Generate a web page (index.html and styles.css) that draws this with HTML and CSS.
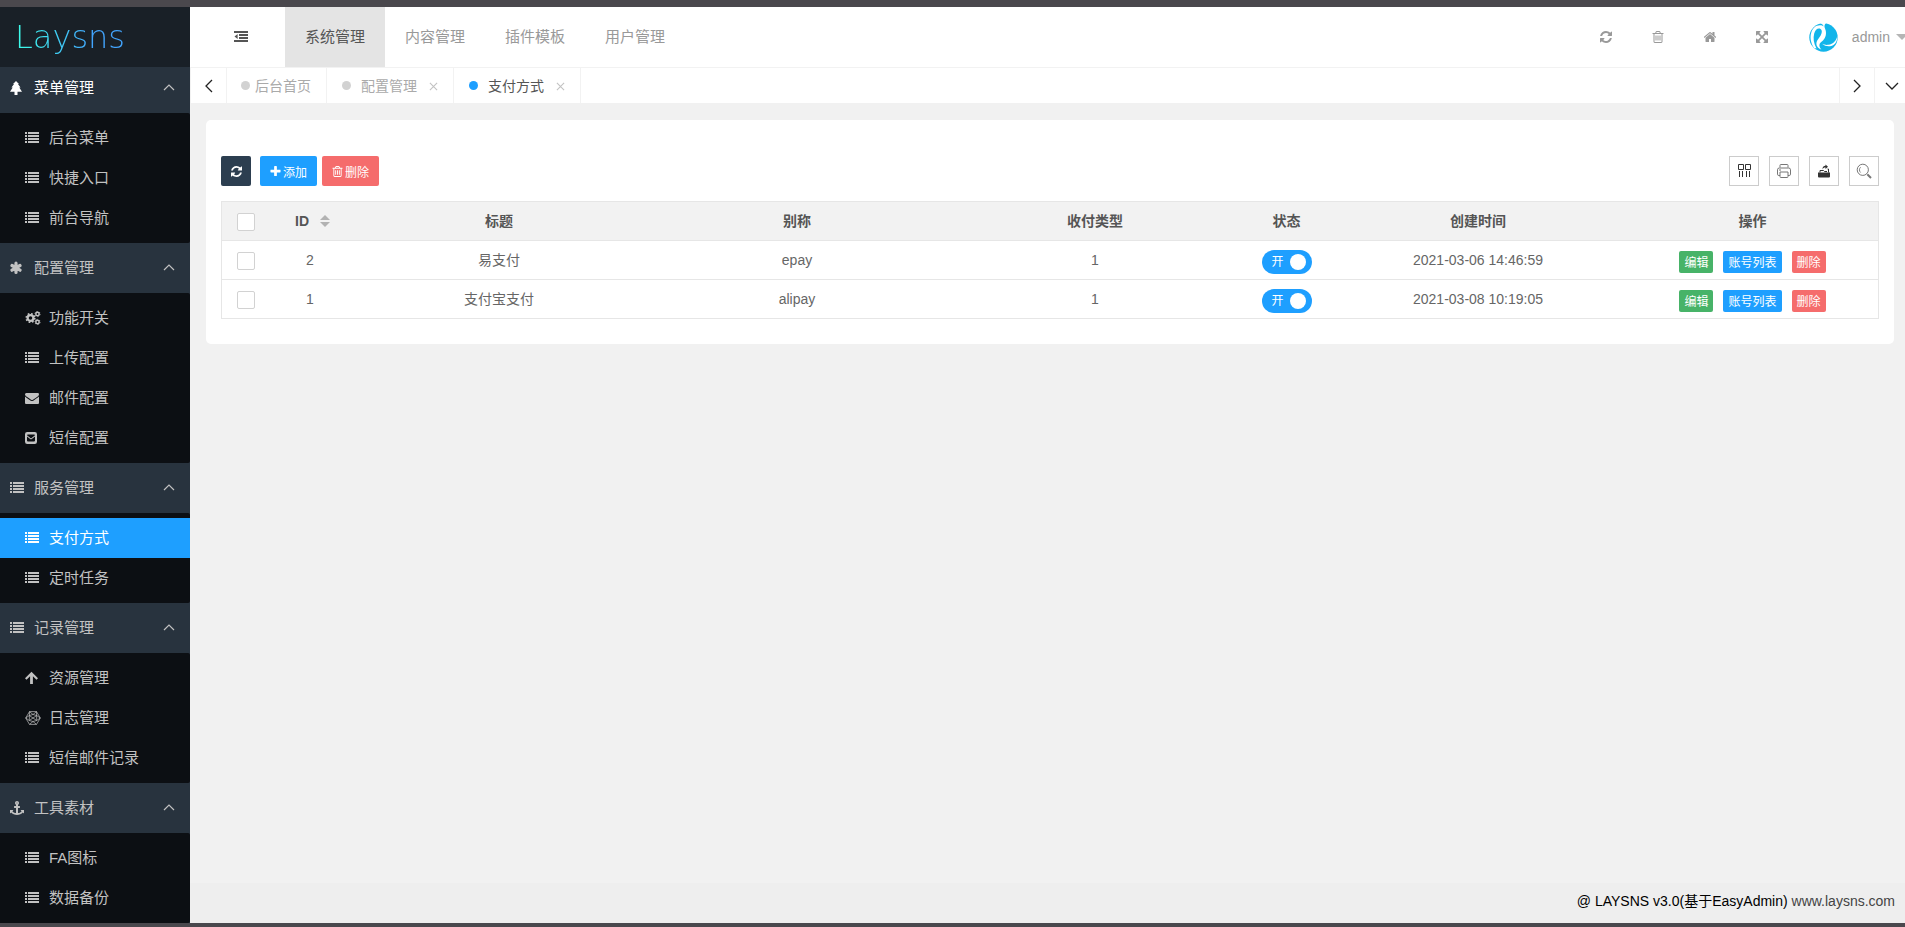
FILE: index.html
```html
<!DOCTYPE html>
<html lang="zh-CN">

<head>
  <meta charset="UTF-8">
  <meta name="viewport" content="width=device-width, initial-scale=1.0">
  <title>Laysns</title>
  <link rel="stylesheet" href="styles.css">
</head>

<body>
  <!-- icon set -->
  <svg class="icon-set" aria-hidden="true">
    <symbol id="i-list" viewBox="0 0 14 14">
      <path d="M0 1h2v2H0zM3 1h11v2H3zM0 4h2v2H0zM3 4h11v2H3zM0 7h2v2H0zM3 7h11v2H3zM0 10h2v2H0zM3 10h11v2H3z" shape-rendering="crispEdges" />
    </symbol>
    <symbol id="i-outdent" viewBox="0 0 14 14">
      <path d="M0 1h14v2H0zM5 4h9v2H5zM5 7h9v2H5zM0 10h14v2H0z" shape-rendering="crispEdges" />
      <path d="M3.6 3.9v5L.5 6.4z" />
    </symbol>
    <symbol id="i-tree" viewBox="0 0 14 14">
      <path d="M6 0l3 3H8l2.500 3.500H9.300L12 10.800H7.500V14h-3v-3.200H0l2.700-4.300H1.500L4 3H3z" />
    </symbol>
    <symbol id="i-asterisk" viewBox="0 0 14 14">
      <path d="M6 2.200v9.300M2 4.500l8 4.700M10 4.500L2 9.200" fill="none" stroke="currentColor" stroke-width="3.200" stroke-linecap="round" />
    </symbol>
    <symbol id="i-cogs" viewBox="0 0 15 14">
      <circle cx="5" cy="7" r="2.900" fill="none" stroke="currentColor" stroke-width="2.200" />
      <circle cx="5" cy="7" r="4.300" fill="none" stroke="currentColor" stroke-width="1.600" stroke-dasharray="1.690 1.690" />
      <circle cx="12" cy="3" r="1.700" fill="none" stroke="currentColor" stroke-width="1.500" />
      <circle cx="12" cy="3" r="2.600" fill="none" stroke="currentColor" stroke-width=".8" stroke-dasharray="1.360 1.360" />
      <circle cx="12" cy="11" r="1.700" fill="none" stroke="currentColor" stroke-width="1.500" />
      <circle cx="12" cy="11" r="2.600" fill="none" stroke="currentColor" stroke-width=".8" stroke-dasharray="1.360 1.360" />
    </symbol>
    <symbol id="i-envelope" viewBox="0 0 1792 1792">
      <path d="M1792 710v794q0 66-47 113t-113 47h-1472q-66 0-113-47t-47-113v-794q44 49 101 87 362 246 497 345 57 42 92.500 65.500t94.500 48 110 24.500h2q51 0 110-24.500t94.500-48 92.500-65.500q170-123 498-345 57-39 100-87zm0-294q0 79-49 151t-122 123q-376 261-468 325-10 7-42.500 31t-54 38.500-52 32.500-57.500 27-50 9h-2q-23 0-50-9t-57.500-27-52-32.500-54-38.500-42.500-31q-91-64-262-182.500t-205-142.500q-62-42-117-115.500t-55-136.500q0-78 41.500-130t118.500-52h1472q65 0 112.500 47t47.500 113z" />
    </symbol>
    <symbol id="i-envelope-square" viewBox="0 0 14 14">
      <path fill-rule="evenodd" d="M2.200 1h7.600A2.200 2.200 0 0 1 12 3.200v7.600A2.200 2.200 0 0 1 9.800 13H2.200A2.200 2.200 0 0 1 0 10.800V3.200A2.200 2.200 0 0 1 2.200 1zM2 5.500V9.500a1 1 0 0 0 1 1h6a1 1 0 0 0 1-1V5.500L6.800 7.900a1.300 1.300 0 0 1-1.600 0zM2 4.300L5.400 6.900a1 1 0 0 0 1.200 0L10 4.300a.9.900 0 0 0-1-.8H3a.9.900 0 0 0-1 .8z" />
    </symbol>
    <symbol id="i-arrow-up" viewBox="0 0 14 14">
      <path d="M6.500.8L13 7.300l-1.500 1.500-3.600-3.500V13H5.100V5.300L1.500 8.800 0 7.300z" />
    </symbol>
    <symbol id="i-expeditedssl" viewBox="0 0 16 14">
      <path d="M4.500.6h7L15.300 7l-3.800 6.400h-7L.7 7zM4.500.6L8 3.500l3.500-2.900M4.500 13.400L8 10.500l3.500 2.900M.7 7l3.600-2.500L8 3.500l3.700 1L15.300 7l-3.600 2.500L8 10.500l-3.700-1zM4.500.6l-.2 8.900M11.500.6l.2 8.900M4.300 4.500l7.400 5M11.700 4.500l-7.400 5" fill="none" stroke="currentColor" stroke-width=".7" />
    </symbol>
    <symbol id="i-anchor" viewBox="0 0 1792 1792">
      <path d="M960 256q0-26-19-45t-45-19-45 19-19 45 19 45 45 19 45-19 19-45zm832 928v352q0 22-20 30-8 2-12 2-12 0-23-9l-93-93q-119 143-318.500 226.500t-429.500 83.500-429.500-83.500-318.500-226.500l-93 93q-9 9-23 9-4 0-12-2-20-8-20-30v-352q0-14 9-23t23-9h352q22 0 30 20 8 19-7 35l-100 100q67 91 189.500 153.500t271.500 82.500v-647h-192q-26 0-45-19t-19-45v-128q0-26 19-45t45-19h192v-163q-58-34-93-92.500t-35-128.500q0-106 75-181t181-75 181 75 75 181q0 70-35 128.500t-93 92.500v163h192q26 0 45 19t19 45v128q0 26-19 45t-45 19h-192v647q149-20 271.500-82.500t189.500-153.500l-100-100q-15-16-7-35 8-20 30-20h352q14 0 23 9t9 23z" />
    </symbol>
    <symbol id="i-refresh" viewBox="128 128 1536 1536">
      <path d="M1639 1056q0 5-1 7-64 268-268 434.500t-478 166.500q-146 0-282.500-55t-243.500-157l-129 129q-19 19-45 19t-45-19-19-45v-448q0-26 19-45t45-19h448q26 0 45 19t19 45-19 45l-137 137q71 66 161 102t187 36q134 0 250-65t186-179q11-17 53-117 8-23 30-23h192q13 0 22.500 9.500t9.500 22.500zm25-800v448q0 26-19 45t-45 19h-448q-26 0-45-19t-19-45 19-45l138-138q-148-137-349-137-134 0-250 65t-186 179q-11 17-53 117-8 23-30 23h-199q-13 0-22.500-9.500t-9.500-22.500v-7q65-268 270-434.500t480-166.500q146 0 284 55.500t245 156.500l130-129q19-19 45-19t45 19 19 45z" />
    </symbol>
    <symbol id="i-trash" viewBox="128 128 1536 1536">
      <path d="M704 736v576q0 14-9 23t-23 9h-64q-14 0-23-9t-9-23v-576q0-14 9-23t23-9h64q14 0 23 9t9 23zm256 0v576q0 14-9 23t-23 9h-64q-14 0-23-9t-9-23v-576q0-14 9-23t23-9h64q14 0 23 9t9 23zm256 0v576q0 14-9 23t-23 9h-64q-14 0-23-9t-9-23v-576q0-14 9-23t23-9h64q14 0 23 9t9 23zm128 724v-948h-896v948q0 22 7 40.500t14.500 27 10.500 8.500h832q3 0 10.500-8.500t14.500-27 7-40.500zm-672-1076h448l-48-117q-7-9-17-11h-317q-10 2-17 11zm928 32v64q0 14-9 23t-23 9h-96v948q0 83-47 143.500t-113 60.500h-832q-66 0-113-58.500t-47-141.500v-952h-96q-14 0-23-9t-9-23v-64q0-14 9-23t23-9h309l70-167q15-37 54-63t79-26h320q40 0 79 26t54 63l70 167h309q14 0 23 9t9 23z" />
    </symbol>
    <symbol id="i-home" viewBox="128 128 1536 1536">
      <path d="M1472 992v480q0 26-19 45t-45 19h-384v-384h-256v384h-384q-26 0-45-19t-19-45v-480q0-1 .5-3t.5-3l575-474 575 474q1 2 1 6zm223-69l-62 74q-8 9-21 11h-3q-13 0-21-7l-692-577-692 577q-12 8-24 7-13-2-21-11l-62-74q-8-10-7-23.500t11-21.500l719-599q32-26 76-26t76 26l244 204v-195q0-14 9-23t23-9h192q14 0 23 9t9 23v408l219 182q10 8 11 21.500t-7 23.500z" />
    </symbol>
    <symbol id="i-arrows" viewBox="128 128 1536 1536">
      <path d="M1411 541l-355 355 355 355 144-144q29-31 70-14 39 17 39 59v448q0 26-19 45t-45 19h-448q-42 0-59-40-17-39 14-69l144-144-355-355-355 355 144 144q31 30 14 69-17 40-59 40h-448q-26 0-45-19t-19-45v-448q0-42 40-59 39-17 69 14l144 144 355-355-355-355-144 144q-19 19-45 19-12 0-24-5-40-17-40-59v-448q0-26 19-45t45-19h448q42 0 59 40 17 39-14 69l-144 144 355 355 355-355-144-144q-31-30-14-69 17-40 59-40h448q26 0 45 19t19 45v448q0 42-39 59-13 5-25 5-26 0-45-19z" />
    </symbol>
    <symbol id="i-plus" viewBox="128 128 1536 1536">
      <path d="M1600 736v192q0 40-28 68t-68 28h-416v416q0 40-28 68t-68 28h-192q-40 0-68-28t-28-68v-416h-416q-40 0-68-28t-28-68v-192q0-40 28-68t68-28h416v-416q0-40 28-68t68-28h192q40 0 68 28t28 68v416h416q40 0 68 28t28 68z" />
    </symbol>
    <symbol id="i-up" viewBox="0 0 12 12">
      <path d="M1 8l5-5 5 5" fill="none" stroke="currentColor" stroke-width="1.200" />
    </symbol>
    <symbol id="i-chevron" viewBox="0 0 14 14">
      <path d="M10 1L4 7l6 6" fill="none" stroke="currentColor" stroke-width="1.300" />
    </symbol>
    <symbol id="i-close" viewBox="0 0 10 10">
      <path d="M1 1l8 8M9 1L1 9" fill="none" stroke="currentColor" stroke-width="1.200" />
    </symbol>
    <symbol id="i-cols" viewBox="0 0 16 16">
      <path d="M2.500 1.500h5v5h-5zM9.500 1.500h5v5h-5zM3.500 8v6M6.500 8v6M10.500 8v6M13.500 8v6" fill="none" stroke="currentColor" />
    </symbol>
    <symbol id="i-print" viewBox="0 0 16 16">
      <path d="M4 4.500V2.300a.8.800 0 0 1 .8-.8h6.400a.8.800 0 0 1 .8.800v2.200M4 12.500H2.800a1.300 1.300 0 0 1-1.300-1.300V6.800a1.800 1.800 0 0 1 1.800-1.800h9.400a1.800 1.800 0 0 1 1.800 1.800v4.400a1.300 1.300 0 0 1-1.300 1.300H12M4 9h8v4.700a.8.800 0 0 1-.8.800H4.800a.8.800 0 0 1-.8-.8zM3 7h2" fill="none" stroke="currentColor" />
    </symbol>
    <symbol id="i-export" viewBox="0 0 16 16">
      <path d="M2 9.500h12v4a1 1 0 0 1-1 1H3a1 1 0 0 1-1-1zM9.500 1.500L12 3.800l-2.500 2.300V4.600C8 4.600 7 5.200 6.500 6.500c-.2-2.200 1-3.500 3-3.700z" />
      <path d="M4 9.500V7.500h3.500l1 1H11M11.500 6h1v3.500" fill="none" stroke="currentColor" />
    </symbol>
    <symbol id="i-search" viewBox="0 0 16 16">
      <circle cx="6.800" cy="6.800" r="5.600" fill="none" stroke="currentColor" />
      <path d="M4.600 9.500A3.600 3.600 0 0 1 4.600 4.200M10.600 10.600l1 1" fill="none" stroke="currentColor" stroke-width=".9" />
      <path d="M11.500 11.500l3.500 3.500" stroke="currentColor" stroke-width="2" />
    </symbol>
  </svg>

  <div class="admin">
    <aside class="sidebar">
      <h1 class="logo"><span>Laysns</span></h1>
      <nav class="menu">
        <a class="menu-title hover" href="#"><svg class="icon"><use href="#i-tree" /></svg>菜单管理<svg class="up"><use href="#i-up" /></svg></a>
        <ul class="menu-child">
          <li><a href="#"><svg class="icon"><use href="#i-list" /></svg>后台菜单</a></li>
          <li><a href="#"><svg class="icon"><use href="#i-list" /></svg>快捷入口</a></li>
          <li><a href="#"><svg class="icon"><use href="#i-list" /></svg>前台导航</a></li>
        </ul>
        <a class="menu-title" href="#"><svg class="icon"><use href="#i-asterisk" /></svg>配置管理<svg class="up"><use href="#i-up" /></svg></a>
        <ul class="menu-child">
          <li><a href="#"><svg class="icon wide"><use href="#i-cogs" /></svg>功能开关</a></li>
          <li><a href="#"><svg class="icon"><use href="#i-list" /></svg>上传配置</a></li>
          <li><a href="#"><svg class="icon"><use href="#i-envelope" /></svg>邮件配置</a></li>
          <li><a href="#"><svg class="icon"><use href="#i-envelope-square" /></svg>短信配置</a></li>
        </ul>
        <a class="menu-title" href="#"><svg class="icon"><use href="#i-list" /></svg>服务管理<svg class="up"><use href="#i-up" /></svg></a>
        <ul class="menu-child">
          <li><a class="active" href="#"><svg class="icon"><use href="#i-list" /></svg>支付方式</a></li>
          <li><a href="#"><svg class="icon"><use href="#i-list" /></svg>定时任务</a></li>
        </ul>
        <a class="menu-title" href="#"><svg class="icon"><use href="#i-list" /></svg>记录管理<svg class="up"><use href="#i-up" /></svg></a>
        <ul class="menu-child">
          <li><a href="#"><svg class="icon"><use href="#i-arrow-up" /></svg>资源管理</a></li>
          <li><a href="#"><svg class="icon wide"><use href="#i-expeditedssl" /></svg>日志管理</a></li>
          <li><a href="#"><svg class="icon"><use href="#i-list" /></svg>短信邮件记录</a></li>
        </ul>
        <a class="menu-title" href="#"><svg class="icon"><use href="#i-anchor" /></svg>工具素材<svg class="up"><use href="#i-up" /></svg></a>
        <ul class="menu-child">
          <li><a href="#"><svg class="icon"><use href="#i-list" /></svg>FA图标</a></li>
          <li><a href="#"><svg class="icon"><use href="#i-list" /></svg>数据备份</a></li>
        </ul>
      </nav>
    </aside>

    <div class="main">
      <header class="header">
        <button type="button" class="toggle" aria-label="收起菜单"><svg class="icon"><use href="#i-outdent" /></svg></button>
        <nav class="top-nav">
          <a class="active" href="#">系统管理</a>
          <a href="#">内容管理</a>
          <a href="#">插件模板</a>
          <a href="#">用户管理</a>
        </nav>
        <div class="tools">
          <button type="button" aria-label="刷新"><svg><use href="#i-refresh" /></svg></button>
          <button type="button" aria-label="清理"><svg><use href="#i-trash" /></svg></button>
          <button type="button" aria-label="主页"><svg><use href="#i-home" /></svg></button>
          <button type="button" aria-label="全屏"><svg><use href="#i-arrows" /></svg></button>
        </div>
        <a class="user" href="#">
          <svg class="avatar" viewBox="0 0 29 29">
            <circle cx="14.500" cy="14.500" r="14.200" fill="#12b5ea" />
            <path d="M11 0h6c-2 2-1.800 3.700-.8 6 1.600 4 .8 8.500-2.200 11.500-1.600 1.600-3.400 2.300-3.600 4.500-.1 1.500.6 3 2 4.500C8.500 25 7 22.500 7.500 19.500c.4-2.500 2.500-4.300 4-6.800 1.500-2.600 2-5.500 0-6.700-2.500-1.300-5.300.8-6.300 4.500C4 15 4.600 20 7.500 25.500L5 25C1.500 19.500.8 14 2.300 9.500 3.800 5 6.800 2.200 11 2.300c1.800 0 2.800.5 3.500 1.200C14.500 2 13 .7 11 0z" fill="#fff" />
            <path d="M28.300 12.500c-.5 5-4.300 8.700-8.800 9.300-2.300.3-4.500 0-6.500-1 3.500 3 8.300 3.300 11.800 1 2.300-1.700 4-5 3.500-9.300z" fill="#fff" />
          </svg>
          admin<i class="caret"></i>
        </a>
      </header>

      <div class="tabs">
        <button type="button" class="tab-btn" aria-label="上一个"><svg class="icon"><use href="#i-chevron" /></svg></button>
        <ul class="tab-list">
          <li class="home"><i class="dot"></i><a href="#">后台首页</a></li>
          <li><i class="dot"></i><a href="#">配置管理</a><button type="button" aria-label="关闭"><svg><use href="#i-close" /></svg></button></li>
          <li class="active"><i class="dot"></i><a href="#">支付方式</a><button type="button" aria-label="关闭"><svg><use href="#i-close" /></svg></button></li>
        </ul>
        <button type="button" class="tab-btn next" aria-label="下一个"><svg class="icon"><use href="#i-chevron" /></svg></button>
        <button type="button" class="tab-btn down" aria-label="更多"><svg class="icon"><use href="#i-chevron" /></svg></button>
      </div>

      <main class="content">
        <section class="card">
          <div class="toolbar">
            <button type="button" class="btn btn-dark" aria-label="刷新"><svg><use href="#i-refresh" /></svg></button>
            <button type="button" class="btn btn-blue"><svg><use href="#i-plus" /></svg>添加</button>
            <button type="button" class="btn btn-red"><svg><use href="#i-trash" /></svg>删除</button>
            <div class="toolbar-right">
              <button type="button" aria-label="筛选列"><svg><use href="#i-cols" /></svg></button>
              <button type="button" class="light" aria-label="打印"><svg><use href="#i-print" /></svg></button>
              <button type="button" aria-label="导出"><svg><use href="#i-export" /></svg></button>
              <button type="button" class="light" aria-label="搜索"><svg><use href="#i-search" /></svg></button>
            </div>
          </div>

          <table class="table">
            <colgroup>
              <col class="col-check">
              <col class="col-id">
              <col>
              <col>
              <col>
              <col class="col-status">
              <col>
              <col class="col-action">
            </colgroup>
            <thead>
              <tr>
                <th><input type="checkbox" class="check" aria-label="全选"></th>
                <th><span class="sort">ID<i></i></span></th>
                <th>标题</th>
                <th>别称</th>
                <th>收付类型</th>
                <th>状态</th>
                <th>创建时间</th>
                <th>操作</th>
              </tr>
            </thead>
            <tbody>
              <tr>
                <td><input type="checkbox" class="check" aria-label="选择 2"></td>
                <td>2</td>
                <td>易支付</td>
                <td>epay</td>
                <td>1</td>
                <td class="ctrl"><label class="switch">开<input type="checkbox" checked></label></td>
                <td>2021-03-06 14:46:59</td>
                <td class="ctrl">
                  <div class="actions">
                    <button type="button" class="btn-xs btn-green">编辑</button>
                    <button type="button" class="btn-xs btn-blue">账号列表</button>
                    <button type="button" class="btn-xs btn-red">删除</button>
                  </div>
                </td>
              </tr>
              <tr>
                <td><input type="checkbox" class="check" aria-label="选择 1"></td>
                <td>1</td>
                <td>支付宝支付</td>
                <td>alipay</td>
                <td>1</td>
                <td class="ctrl"><label class="switch">开<input type="checkbox" checked></label></td>
                <td>2021-03-08 10:19:05</td>
                <td class="ctrl">
                  <div class="actions">
                    <button type="button" class="btn-xs btn-green">编辑</button>
                    <button type="button" class="btn-xs btn-blue">账号列表</button>
                    <button type="button" class="btn-xs btn-red">删除</button>
                  </div>
                </td>
              </tr>
            </tbody>
          </table>
        </section>
      </main>

      <footer class="footer">@ LAYSNS v3.0(基于EasyAdmin) <a href="#">www.laysns.com</a></footer>
    </div>
  </div>
</body>

</html>
```
FILE: styles.css
```css
* {
  box-sizing: border-box;
}

body {
  margin: 0;
  height: 100vh;
  padding: 7px 0 4px;
  overflow: hidden;
  background-color: #4a484d;
  font-family: "Liberation Sans", "Noto Sans CJK SC", sans-serif;
  font-size: 14px;
  line-height: 20px;
  color: #666;
}

a {
  color: inherit;
  text-decoration: none;
}

ul {
  list-style: none;
  margin: 0;
  padding: 0;
}

button {
  display: flex;
  align-items: center;
  justify-content: center;
  padding: 0;
  border: none;
  background: none;
  color: inherit;
  font-family: inherit;
  cursor: pointer;
}

svg {
  flex: none;
  fill: currentColor;
}

.icon-set {
  display: none;
}

.icon {
  width: 14px;
  height: 14px;
}

.admin {
  display: flex;
  height: 100%;
}

/* left menu */
.sidebar {
  display: flex;
  flex-direction: column;
  flex: none;
  width: 190px;
  overflow: hidden;
  background-color: #28333e;
}

.logo {
  position: relative;
  z-index: 1;
  flex: none;
  height: 60px;
  margin: 0;
  padding-left: 15px;
  background-color: #192027;
  font-family: "DejaVu Sans Light", "DejaVu Sans", sans-serif;
  font-size: 32px;
  font-weight: 200;
  line-height: 60px;
}

.logo span {
  background: linear-gradient(to right, #3dffe8, #42a5ff 70%);
  -webkit-background-clip: text;
  background-clip: text;
  color: transparent;
}

.menu {
  /* menu is scrolled slightly under the logo */
  margin-top: -4px;
  font-size: 15px;
  color: #c2c2c2;
}

.menu a {
  display: flex;
  align-items: center;
}

.menu .icon {
  margin-right: 10px;
}

.menu .icon.wide {
  width: 16px;
  margin-right: 8px;
}

.menu-title {
  height: 50px;
  padding: 0 15px 0 10px;
}

.menu-title.hover {
  color: #fff;
}

.menu-title .up {
  width: 12px;
  height: 12px;
  margin-left: auto;
  color: #c2c2c2;
}

.menu-child {
  padding: 5px 0;
  border-radius: 0 2px 2px 0;
  background-color: #0c0f13;
}

.menu-child a {
  height: 40px;
  padding-left: 25px;
}

.menu-child a.active {
  background-color: #1e9fff;
  color: #fff;
}

/* right side */
.main {
  display: flex;
  flex-direction: column;
  flex: 1;
  min-width: 0;
  overflow: hidden;
  background-color: #f1f1f1;
}

.header {
  display: flex;
  flex: none;
  height: 60px;
  background-color: #fff;
  color: #999;
}

.toggle {
  width: 95px;
  padding-left: 7px;
  color: #555;
}

.top-nav {
  display: flex;
  font-size: 15px;
}

.top-nav a {
  padding: 0 20px;
  line-height: 60px;
}

.top-nav a.active {
  background-color: #e4e4e4;
  color: #555;
}

.tools {
  display: flex;
  margin-left: auto;
}

.tools button {
  width: 52px;
}

.tools svg {
  width: 12px;
  height: 12px;
}

.user {
  display: flex;
  align-items: center;
  margin: 0 -3px 0 21px;
}

.avatar {
  width: 29px;
  height: 29px;
  margin-right: 14px;
}

.caret {
  margin-left: 6px;
  border: 6px solid transparent;
  border-top-color: #b5b5b5;
  border-bottom: none;
}

.tabs {
  display: flex;
  flex: none;
  height: 36px;
  border-top: 1px solid #f2f2f2;
  border-left: 1px solid #f2f2f2;
  background-color: #fff;
}

.tab-btn {
  flex: none;
  width: 36px;
  border-right: 1px solid #f2f2f2;
  color: #222;
}

.tab-btn.next {
  width: 35px;
  margin-left: auto;
  border-left: 1px solid #f2f2f2;
  border-right: none;
}

.tab-btn.next svg {
  transform: rotate(180deg);
}

.tab-btn.down {
  margin-right: -5px;
  border-left: 1px solid #f2f2f2;
}

.tab-btn.down svg {
  transform: rotate(-90deg);
}

.tab-list {
  display: flex;
  color: #aaa;
}

.tab-list li {
  display: flex;
  align-items: center;
  padding: 0 13px 0 15px;
  border-right: 1px solid #f2f2f2;
}

.tab-list .dot {
  width: 9px;
  height: 9px;
  margin-right: 10px;
  border-radius: 50%;
  background-color: #d2d2d2;
}

.tab-list .home {
  padding: 0 15px 0 14px;
}

.tab-list .home .dot {
  margin-right: 5px;
}

.tab-list .active {
  color: #555;
}

.tab-list .active .dot {
  background-color: #1e9fff;
}

.tab-list button {
  width: 14px;
  height: 14px;
  margin: 2px 0 0 9px;
  color: #c2c2c2;
}

.tab-list button svg {
  width: 9px;
  height: 9px;
}

.content {
  flex: 1;
  padding: 17px 11px 0 16px;
}

.card {
  padding: 36px 15px 25px;
  border-radius: 5px;
  background-color: #fff;
}

.toolbar {
  display: flex;
  gap: 5px;
  margin-bottom: 15px;
}

.btn {
  gap: 2px;
  height: 30px;
  padding: 0 10px;
  border-radius: 2px;
  color: #fff;
  font-size: 12px;
}

.btn svg {
  width: 11px;
  height: 11px;
}

.btn-dark {
  width: 30px;
  margin-right: 4px;
  background-color: #2c3e50;
}

.btn-blue {
  background-color: #1e9fff;
}

.btn-red {
  background-color: #f56c6c;
}

.btn-green {
  background-color: #47b368;
}

.toolbar-right {
  display: flex;
  gap: 10px;
  margin-left: auto;
}

.toolbar-right button {
  width: 30px;
  height: 30px;
  border: 1px solid #ccc;
  color: #333;
}

.toolbar-right button.light {
  color: #777;
}

.toolbar-right svg {
  width: 16px;
  height: 16px;
}

/* table */
.table {
  width: 100%;
  table-layout: fixed;
  border: 1px solid #e6e6e6;
  border-spacing: 0;
}

.table th,
.table td {
  height: 39px;
  padding: 0;
  border-bottom: 1px solid #e6e6e6;
  text-align: center;
}

.table tbody tr:last-child td {
  height: 38px;
  border-bottom: none;
}

.table th {
  background-color: #f2f2f2;
  color: #555;
}

.table td.ctrl {
  padding-top: 3px;
}

.col-check {
  width: 48px;
}

.col-id {
  width: 80px;
}

.col-status {
  width: 85px;
}

.col-action {
  width: 251px;
}

.check {
  appearance: none;
  display: block;
  width: 18px;
  height: 18px;
  margin: 1px auto 0;
  border: 1px solid #d2d2d2;
  border-radius: 2px;
  background-color: #fff;
}

.sort {
  display: flex;
  align-items: center;
  justify-content: center;
  gap: 11px;
  padding-left: 5px;
}

.sort i {
  display: flex;
  flex-direction: column;
  gap: 2px;
}

.sort i::before,
.sort i::after {
  content: "";
  border: 5px solid transparent;
}

.sort i::before {
  border-top: none;
  border-bottom-color: #b2b2b2;
}

.sort i::after {
  border-bottom: none;
  border-top-color: #b2b2b2;
}

.switch {
  display: flex;
  align-items: center;
  justify-content: space-between;
  width: 50px;
  height: 24px;
  margin: 0 auto;
  padding: 0 6px 0 10px;
  border-radius: 12px;
  background-color: #1e9fff;
  color: #fff;
  font-size: 12px;
}

.switch input {
  appearance: none;
  width: 16px;
  height: 16px;
  margin: 0;
  border-radius: 50%;
  background-color: #fff;
}

.actions {
  display: flex;
  justify-content: center;
  gap: 10px;
}

.btn-xs {
  height: 22px;
  padding: 0 5px;
  border-radius: 2px;
  color: #fff;
  font-size: 12px;
}

.footer {
  flex: none;
  height: 40px;
  padding-right: 10px;
  background-color: #eee;
  color: #000;
  line-height: 36px;
  text-align: right;
}

.footer a {
  color: #444;
}
```
